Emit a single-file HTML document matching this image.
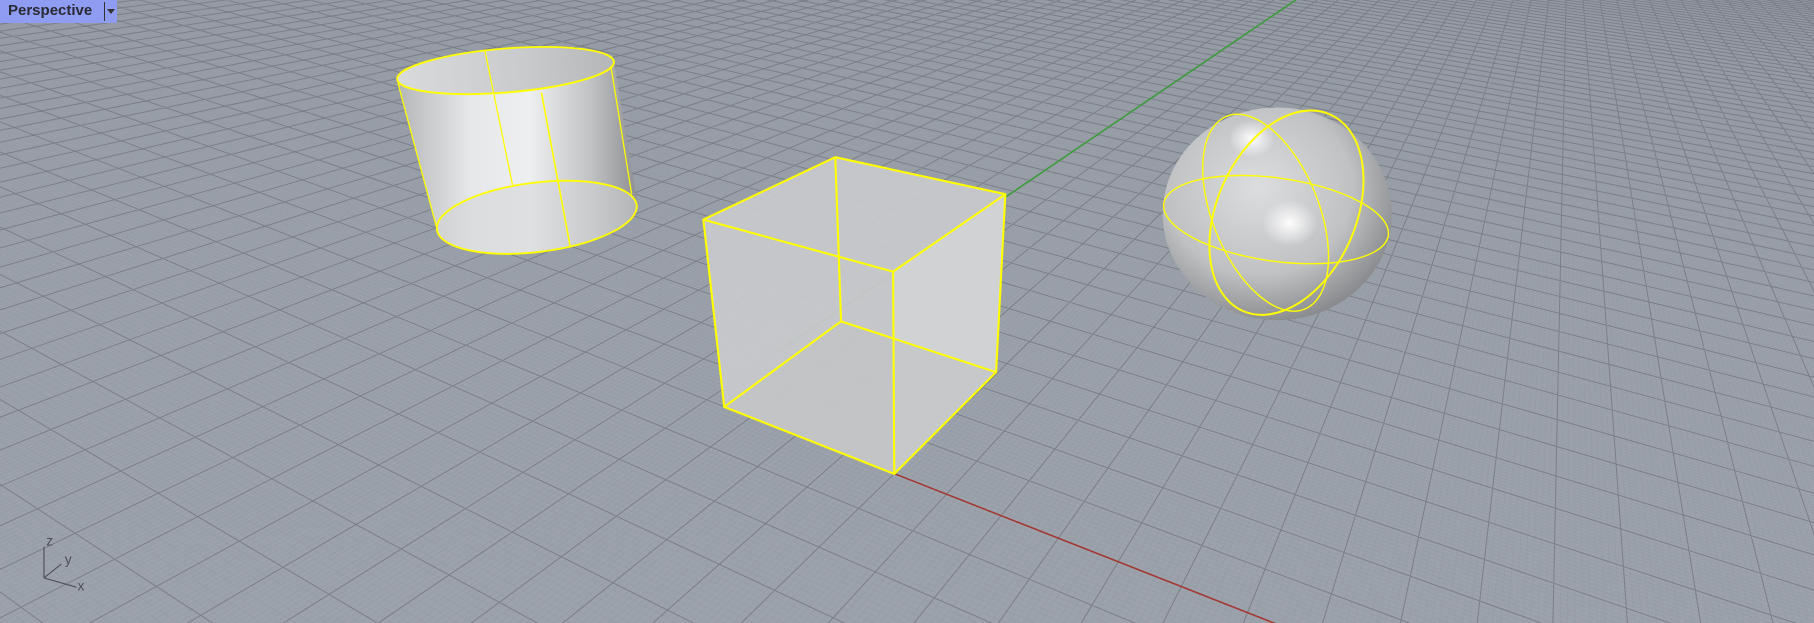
<!DOCTYPE html>
<html><head><meta charset="utf-8">
<style>
html,body{margin:0;padding:0;overflow:hidden;width:1814px;height:623px;}
body{background:#9ca2ab;position:relative;font-family:"Liberation Sans",sans-serif;}
svg#v{position:absolute;left:0;top:0;display:block;}
.tab{position:absolute;left:0;top:0;width:117px;height:23px;background:#8e9cf2;}
.tab span{position:absolute;left:8px;top:2px;font-weight:bold;font-size:15px;color:#2a2a33;}
.tab i{position:absolute;left:104px;top:2px;width:1px;height:19px;background:#333;}
.tab b{position:absolute;left:107px;top:9px;width:0;height:0;border-left:4px solid transparent;border-right:4px solid transparent;border-top:5px solid #333;}
</style></head><body>
<svg id="v" width="1814" height="623" viewBox="0 0 1568 539" preserveAspectRatio="none">
<defs>
<linearGradient id="cyl" x1="0" y1="0" x2="1" y2="0">
<stop offset="0" stop-color="#b4b6b8"/><stop offset="0.3" stop-color="#e6e7e8"/><stop offset="0.55" stop-color="#eeeff0"/><stop offset="0.8" stop-color="#c2c3c5"/><stop offset="1" stop-color="#8d8f92"/>
</linearGradient>
<linearGradient id="cyltop" x1="0" y1="0" x2="1" y2="0">
<stop offset="0" stop-color="#d9dadc"/><stop offset="0.6" stop-color="#c9cacc"/><stop offset="1" stop-color="#b4b6b8"/>
</linearGradient>
<radialGradient id="sph" cx="0.42" cy="0.38" r="0.68">
<stop offset="0" stop-color="#dcdddf"/><stop offset="0.6" stop-color="#c0c1c3"/><stop offset="1" stop-color="#7f8184"/>
</radialGradient>
<radialGradient id="hl" cx="0.5" cy="0.5" r="0.5">
<stop offset="0" stop-color="#fff" stop-opacity="0.95"/><stop offset="1" stop-color="#fff" stop-opacity="0"/>
</radialGradient>
</defs>
<g id="grid"></g>
<g id="axes"></g>
<g>
<path d="M344,70 L378,199 A87,30 -7 0 0 551,177 L531,55 Z" fill="url(#cyl)"/>
<ellipse cx="437" cy="61" rx="94" ry="19" transform="rotate(-4.6 437 61)" fill="url(#cyltop)"/>
<ellipse cx="464" cy="188" rx="87" ry="30" transform="rotate(-7 464 188)" fill="#d2d3d5" opacity="0.55"/>
<g fill="none" stroke="#ffff00" stroke-width="1.6">
<ellipse cx="437" cy="61" rx="94" ry="19" transform="rotate(-4.6 437 61)"/>
<ellipse cx="464" cy="188" rx="87" ry="30" transform="rotate(-7 464 188)"/>
<line x1="344" y1="72" x2="378" y2="199" stroke-width="1.1"/>
<line x1="528" y1="57" x2="546" y2="168" stroke-width="1.1"/>
<line x1="419" y1="43" x2="443" y2="160" stroke-width="1.1"/>
<line x1="468" y1="80" x2="493" y2="214" stroke-width="1.4"/>
</g>
</g>
<g>
<polygon points="608,190 722,136 869,168 861,322 773,410 626,352" fill="#c9cacc" opacity="0.92"/>
<polygon points="772,235 869,168 861,322 773,410" fill="#d3d4d6" opacity="0.8"/>
<polygon points="626,352 727,278 861,322 773,410" fill="#c0c1c3" opacity="0.6"/>
<g fill="none" stroke="#ffff00" stroke-width="1.8" stroke-linejoin="round">
<polygon points="608,190 722,136 869,168 772,235"/>
<polygon points="626,352 727,278 861,322 773,410"/>
<line x1="608" y1="190" x2="626" y2="352"/>
<line x1="722" y1="136" x2="727" y2="278"/>
<line x1="869" y1="168" x2="861" y2="322"/>
<line x1="772" y1="235" x2="773" y2="410"/>
</g>
</g>
<g>
<ellipse cx="1104" cy="185" rx="99" ry="92" fill="url(#sph)"/>
<ellipse cx="1082" cy="120" rx="20" ry="16" fill="url(#hl)"/>
<ellipse cx="1115" cy="193" rx="24" ry="20" fill="url(#hl)"/>
<g fill="none" stroke="#ffff00" stroke-width="1.2">
<ellipse cx="1103" cy="190" rx="98" ry="36" transform="rotate(8 1103 190)"/>
<ellipse cx="1112" cy="184" rx="60" ry="93" transform="rotate(24 1112 184)" stroke-width="1.7"/>
<ellipse cx="1094" cy="184" rx="46" ry="90" transform="rotate(-22 1094 184)"/>
</g>
</g>
<g stroke="#4e5258" stroke-width="1" fill="none">
<line x1="38" y1="500" x2="38" y2="473"/>
<line x1="38" y1="500" x2="66" y2="508"/>
<line x1="38" y1="500" x2="53" y2="488"/>
</g>
<g fill="#4e5258" font-family="Liberation Sans, sans-serif" font-size="12">
<text x="40" y="472">z</text><text x="56" y="488">y</text><text x="67" y="511">x</text>
</g>
</svg>
<div class="tab"><span>Perspective</span><i></i><b></b></div>
<script>
(function(){
var Ox=611,Oy=346,VXx=-1207,VXy=-370,VYx=1357,VYy=-161,al=-0.002045,be=0.0046;
function W(u,v){return 1+al*u+be*v;}
function pr(u,v){var w=W(u,v);return [(Ox+al*u*VXx+be*v*VYx)/w,(Oy+al*u*VXy+be*v*VYy)/w];}
var NS="http://www.w3.org/2000/svg";
var eps=0.03;
function seg(p,q){
 var wp=W(p[0],p[1]),wq=W(q[0],q[1]);
 if(wp<eps&&wq<eps)return null;
 if(wp<eps){var t=(eps-wp)/(wq-wp);p=[p[0]+t*(q[0]-p[0]),p[1]+t*(q[1]-p[1])];}
 if(wq<eps){var t2=(eps-wq)/(wp-wq);q=[q[0]+t2*(p[0]-q[0]),q[1]+t2*(p[1]-q[1])];}
 var A=pr(p[0],p[1]),B=pr(q[0],q[1]);
 return "M"+A[0].toFixed(1)+","+A[1].toFixed(1)+"L"+B[0].toFixed(1)+","+B[1].toFixed(1);
}
var E=1000,minor="",major="";
for(var i=-E;i<=E;i++){
 var s1=seg([i,-E],[i,E]),s2=seg([-E,i],[E,i]);
 var m=(i%10===0);
 if(s1){if(m)major+=s1;else minor+=s1;}
 if(s2){if(m)major+=s2;else minor+=s2;}
}
var G=document.getElementById("grid");
function add(par,dd,col,w){if(!dd)return;var p=document.createElementNS(NS,"path");p.setAttribute("d",dd);p.setAttribute("stroke",col);p.setAttribute("stroke-width",w);p.setAttribute("fill","none");p.setAttribute("vector-effect","non-scaling-stroke");par.appendChild(p);}
add(G,minor,"#959ba4",0.6);
add(G,major,"#7a7f87",1);
var A=document.getElementById("axes");
add(A,seg([20,0],[E,0]),"#a33a36",1.6);
add(A,seg([0,20],[0,E]),"#3e9a3e",1.6);
})();
</script>
</body></html>
